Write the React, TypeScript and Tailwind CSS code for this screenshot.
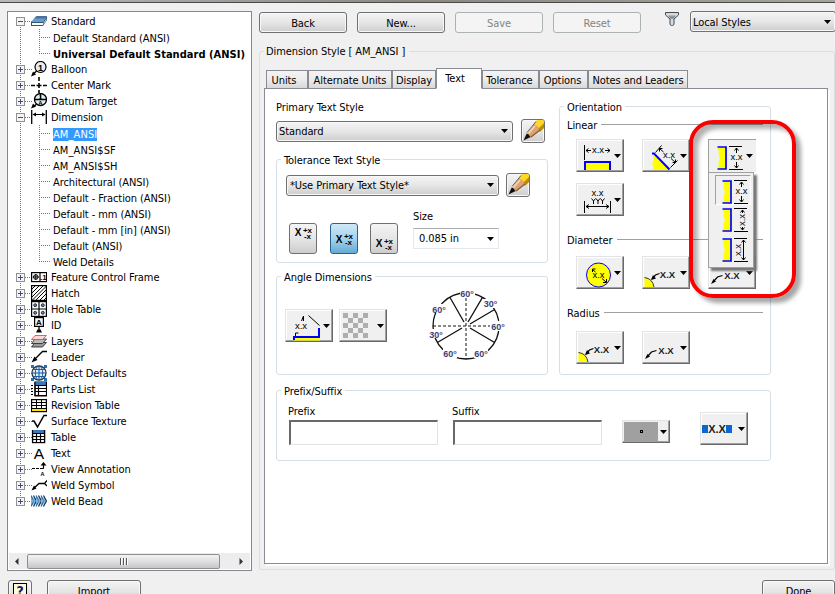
import React from 'react'
import clsx from 'clsx'

const FONT = "font-['DejaVu_Sans_Condensed','DejaVu_Sans',sans-serif]"

const treeItems = [
  {
    icon: 'standard',
    text: 'Standard',
    children: ['Default Standard (ANSI)', 'Universal Default Standard (ANSI)'],
  },
  { icon: 'balloon', text: 'Balloon' },
  { icon: 'center', text: 'Center Mark' },
  { icon: 'datum', text: 'Datum Target' },
  {
    icon: 'dimension',
    text: 'Dimension',
    children: [
      'AM_ANSI',
      'AM_ANSI$SF',
      'AM_ANSI$SH',
      'Architectural (ANSI)',
      'Default - Fraction (ANSI)',
      'Default - mm (ANSI)',
      'Default - mm [in] (ANSI)',
      'Default (ANSI)',
      'Weld Details',
    ],
  },
  { icon: 'fcf', text: 'Feature Control Frame' },
  { icon: 'hatch', text: 'Hatch' },
  { icon: 'hole', text: 'Hole Table' },
  { icon: 'id', text: 'ID' },
  { icon: 'layers', text: 'Layers' },
  { icon: 'leader', text: 'Leader' },
  { icon: 'globe', text: 'Object Defaults' },
  { icon: 'parts', text: 'Parts List' },
  { icon: 'revision', text: 'Revision Table' },
  { icon: 'surface', text: 'Surface Texture' },
  { icon: 'table', text: 'Table' },
  { icon: 'text', text: 'Text' },
  { icon: 'view', text: 'View Annotation' },
  { icon: 'weld', text: 'Weld Symbol' },
  { icon: 'bead', text: 'Weld Bead' },
]

const SvgText = ({ x, y, size = 9.5, bold = false, fill = '#000', children }: any) => (
  <text
    x={x}
    y={y}
    fontSize={size}
    fontWeight={bold ? 700 : 400}
    textAnchor="middle"
    letterSpacing="0"
    fill={fill}
    stroke="none"
    fontFamily="'Liberation Sans', sans-serif"
  >
    {children}
  </text>
)

const treeIcons: Record<string, React.ReactNode> = {
  standard: (
    <g stroke="none">
      <path d="M5 3h11l-4 6H0z" fill="#6c9cc8" />
      <path d="M6 3h10l-2 2.500H4z" fill="#4c7097" />
      <path d="M0 9h12l4-6v4l-4 6H0z" fill="#2f587f" />
      <path d="M1 10h11v2H1z" fill="#fff" />
      <path d="M12.500 10l3-4.500v1.500l-3 4.500z" fill="#cfdbe6" />
    </g>
  ),
  balloon: (
    <g>
      <circle cx="9.500" cy="6" r="5.500" fill="#e2edf5" strokeWidth="1.200" />
      <path d="M5.500 10l-3 3" strokeWidth="1.500" />
      <path d="M0 15.500l2-5 3 3z" fill="#000" stroke="none" />
      <SvgText x={9.500} y={9.500} size={9} bold>1</SvgText>
    </g>
  ),
  center: <path d="M8 0v4M8 6v5M8 13v3M0 8.500h4M5.500 8.500h5M12 8.500h4" strokeWidth="1.600" />,
  datum: (
    <g>
      <circle cx="9.500" cy="6.500" r="6" fill="#e2edf5" strokeWidth="1.300" />
      <path d="M3.500 6.500h12M9.500 1v5M5.500 11l-3 3" strokeWidth="1.300" />
      <path d="M0 15.500l2-5 3 3z" fill="#000" stroke="none" />
      <SvgText x={9.500} y={5.800} size={5.500} bold>1</SvgText>
      <SvgText x={9.500} y={12} size={6} bold>A</SvgText>
    </g>
  ),
  dimension: (
    <g>
      <path d="M.7 1v14M15.300 1v14" strokeWidth="1.300" />
      <path d="M2 5.500h12" />
      <path d="M1.500 5.500l3.500-2v4zM14.500 5.500l-3.500-2v4z" fill="#000" stroke="none" />
    </g>
  ),
  fcf: (
    <g>
      <rect x=".6" y="3.600" width="15" height="9" fill="#fff" strokeWidth="1.200" />
      <path d="M9 3.500v9" strokeWidth="1.200" />
      <circle cx="4.800" cy="8" r="2.300" />
      <path d="M4.800 5v6M1.800 8h6" />
      <SvgText x={12.300} y={11} size={8} bold>.1</SvgText>
    </g>
  ),
  hatch: (
    <g>
      <rect x=".6" y=".6" width="14.800" height="14.800" fill="#fff" strokeWidth="1.200" />
      <path d="M1 4l3-3M1 8l7-7M1 12l11-11M1 15.500l14.500-14.500M5 15l10-10M9 15l6-6M13 15l2-2" />
    </g>
  ),
  hole: (
    <g>
      <rect x=".6" y=".6" width="14.800" height="14.800" fill="#fff" strokeWidth="1.200" />
      <path d="M8 0v16M0 8h16" strokeWidth="1.200" />
      <g fill="#5b87b3" strokeWidth=".7">
        <circle cx="4.200" cy="4.200" r="1.500" />
        <circle cx="11.800" cy="4.200" r="1.500" />
        <circle cx="4.200" cy="11.800" r="1.500" />
        <circle cx="11.800" cy="11.800" r="1.500" />
      </g>
    </g>
  ),
  id: (
    <g>
      <rect x="3.600" y=".6" width="8.800" height="8.800" fill="#eef5fb" strokeWidth="1.200" />
      <SvgText x={8} y={8} size={8} bold>A</SvgText>
      <path d="M8 9v5" strokeWidth="1.300" />
      <path d="M5 15.500l1.500-3h3l1.500 3z" fill="#000" stroke="none" />
    </g>
  ),
  layers: (
    <g strokeWidth=".9">
      <path d="M4 9.500h11.500l-4 4.500H.5z" fill="#999" stroke="#333" />
      <path d="M4 6h11.500l-4 4.500H.5z" fill="#bbb" stroke="#333" />
      <path d="M4 2.500h11.500l-4 4H.5z" fill="#fbd7d7" stroke="#e64d4d" />
    </g>
  ),
  leader: (
    <g>
      <path d="M16 2.500h-4.500l-8 8" strokeWidth="1.300" />
      <path d="M.5 13.500l3-6 3 3.500z" fill="#000" stroke="none" />
    </g>
  ),
  globe: (
    <g stroke="#1d5a9a">
      <path d="M0 0h3v3H0zM13 0h3v3h-3zM0 13h3v3H0zM13 13h3v3h-3z" fill="#2471b7" stroke="none" />
      <circle cx="8" cy="8" r="7" fill="#dff0fc" strokeWidth="1.300" stroke="#333" />
      <path d="M8 1v14M1 8h14M2 4.500h12M2 11.500h12" strokeWidth="1.100" />
      <ellipse cx="8" cy="8" rx="3.700" ry="7" />
    </g>
  ),
  parts: (
    <g>
      <rect x="4" y="1" width="11.500" height="14" fill="#fff" />
      <rect x="4" y="1" width="11.500" height="3" fill="#3a78b9" stroke="none" />
      <path d="M4 4.500h12M4 7.500h12M4 10.500h12M4 14.500h12M7.500 4v11M4 1v14M15.500 1v14" strokeWidth="1.200" />
      <path d="M0 4.500h2M0 7.500h2M0 10.500h2M0 13.500h2" />
    </g>
  ),
  revision: (
    <g>
      <rect x=".6" y="2.600" width="14.800" height="12" fill="#fff" strokeWidth="1.200" />
      <path d="M1 12h14v2H1z" fill="#ffe600" stroke="none" />
      <path d="M1 5.500h14M1 8.500h14M1 11.500h14M5.500 3v9M10.500 3v9" />
    </g>
  ),
  surface: <path d="M1 8h2l3.500 6L13 2.500h3" strokeWidth="1.500" />,
  table: (
    <g>
      <rect x="1.600" y="1.600" width="12" height="12" fill="#fff" strokeWidth="1.200" />
      <path d="M1 1h13v3H1z" fill="#3a78b9" stroke="none" />
      <path d="M1 4.500h13M1 7.500h13M1 10.500h13M5.500 4v10M9.500 4v10M1.500 1v13M13.500 1v13" strokeWidth="1.200" />
    </g>
  ),
  text: <SvgText x={8} y={14} size={15.5}>A</SvgText>,
  view: (
    <g>
      <path d="M1 7.500h3M5 7.500h3M9 7.500h3.500M12.500 7.500V3" strokeWidth="1.200" />
      <path d="M12.500 1l-3 3.500h6z" fill="#000" stroke="none" />
      <SvgText x={11.500} y={15} size={5.500} bold>A</SvgText>
    </g>
  ),
  weld: (
    <g>
      <path d="M2 12l6-5.500h5.500M16 3.500l-2.500 3 2.500 2.500" strokeWidth="1.300" />
      <path d="M.5 13.500l2.500-5 2.500 3z" fill="#000" stroke="none" />
    </g>
  ),
  bead: (
    <g strokeWidth="1.200">
      {[0, 2.5, 5, 7.5, 10, 12.5].map((x) => (
        <path key={x} d={`M${x} 2.500l3 5.500l-3 5.500`} stroke={x % 5 ? '#1b3550' : '#2b6ba3'} fill="#7db0dc" />
      ))}
    </g>
  ),
}

const TreeRow = ({ icon, text, expanded, first, last }: any) => (
  <div className="flex h-4 items-center">
    <svg width="23" height="16" className="ml-[7px] shrink-0" shapeRendering="crispEdges">
      <path d={first ? 'M4.500 8v8' : last ? 'M4.500 0v8' : 'M4.500 0v16'} stroke="#777" strokeDasharray="1 1" />
      <path d="M9 8.500h7" stroke="#777" strokeDasharray="1 1" />
      <rect x=".5" y="4.500" width="8" height="8" fill="#f4f4f4" stroke="#919191" />
      <path d={expanded ? 'M2 8.500h5' : 'M2 8.500h5M4.500 6v5'} stroke="#33508c" />
    </svg>
    <svg width="16" height="16" viewBox="0 0 16 16" fill="none" stroke="#000" className="-ml-2 shrink-0">
      {treeIcons[icon]}
    </svg>
    <span className="ml-1 pt-0.5 leading-4">{text}</span>
  </div>
)

const TreeChild = ({ text, last }: any) => (
  <div className="flex h-4 items-center">
    <svg width="44" height="16" className="shrink-0" shapeRendering="crispEdges">
      <path d="M11.500 0v16" stroke="#777" strokeDasharray="1 1" />
      <path d={last ? 'M30.500 0v8M30 8.500h11' : 'M30.500 0v16M30 8.500h11'} stroke="#777" strokeDasharray="1 1" />
    </svg>
    <span
      className={clsx(
        'mt-0.5 h-[13px] leading-[13px]',
        text === 'AM_ANSI' && 'bg-[#3399ff] text-white',
        text.startsWith('AM_') && 'tracking-[0.1px]',
        text.startsWith('Universal') && 'font-bold tracking-[0.03px]'
      )}
    >
      {text}
    </span>
  </div>
)

const Tree = () => (
  <div className="flex h-[560px] w-[245px] shrink-0 flex-col border border-[#828790] bg-white p-px">
    <div className="flex-1">
      {treeItems.map((item, index) => (
        <div key={item.text}>
          <TreeRow {...item} expanded={!!item.children} first={index === 0} last={index === treeItems.length - 1} />
          {item.children &&
            item.children.map((child, i) => (
              <TreeChild key={child} text={child} last={i === item.children.length - 1} />
            ))}
        </div>
      ))}
    </div>
    <div className="flex h-4 items-center bg-[#ededed]">
      <svg width="18" height="15">
        <path d="M9.500 4v7l-3.500-3.500z" fill="#333" />
      </svg>
      <div className="flex h-[15px] w-[193px] items-center justify-center gap-px rounded-[2px] border border-[#8f8f8f] bg-gradient-to-b from-[#f3f3f3] via-[#dfdfdf] to-[#c6c6c6]">
        <i className="h-[7px] w-0.5 border-r border-white bg-[#555]" />
        <i className="h-[7px] w-0.5 border-r border-white bg-[#555]" />
        <i className="h-[7px] w-0.5 border-r border-white bg-[#555]" />
      </div>
      <svg width="29" height="15">
        <path d="M19.500 4v7l3.500-3.500z" fill="#333" />
      </svg>
    </div>
  </div>
)

const Caret = () => (
  <svg width="7" height="4" className="shrink-0">
    <path d="M0 0h7l-3.500 4z" />
  </svg>
)

const Button = ({ children, className, disabled }: any) => (
  <button
    className={clsx(
      'flex items-center justify-center rounded-[3px] border',
      disabled
        ? 'border-[#adb2b5] bg-[#f4f4f4] text-[#838383]'
        : 'border-[#707070] bg-gradient-to-b from-[#f4f4f4] via-[#e6e6e6] to-[#cdcdcd] shadow-[inset_0_0_0_1px_#f8f8f8]',
      className
    )}
  >
    {children}
  </button>
)

const Select = ({ children, className }: any) => (
  <div
    className={clsx(
      'flex h-[21px] shrink-0 items-center justify-between rounded-[3px] border border-[#707070] bg-gradient-to-b from-[#f4f4f4] via-[#e6e6e6] to-[#cdcdcd] pr-1 pl-0.5 shadow-[inset_0_0_0_1px_#f8f8f8]',
      className
    )}
  >
    <span className="pt-[3px]">{children}</span>
    <Caret />
  </div>
)

const Group = ({ title, className, children }: any) => (
  <div className={clsx('flex flex-col rounded-[3px] border border-[#d5dfe5]', className)}>
    <div className="-mt-[7px] ml-1 h-4 w-fit shrink-0 bg-white px-[3px] leading-4">{title}</div>
    {children}
  </div>
)

const PencilButton = () => (
  <Button className="h-6 w-6 shrink-0 overflow-hidden">
    <svg width="22" height="22" viewBox="0 0 22 22" className="shrink-0">
      <path d="M14 1h7.500v7L9 17.500l-6 2 3-7z" fill="#dda273" />
      <path d="M13 3l2-3h7v7l-4 4q-1-5-5-6z" fill="#ffd91f" />
      <path d="M22 3v5l-4 4-1.500-3.500z" fill="#b98d00" />
      <path d="M9 17l9-7" fill="none" stroke="#8d5a30" strokeWidth="1.200" />
      <path d="M13 6L6.500 13.500" fill="none" stroke="#f7d3b2" strokeWidth="1.700" />
      <path d="M1.500 20.500l3.200-7 1.800 1 2 2.500z" fill="#111" />
      <path d="M14 1.500L5 12.500" stroke="#444" strokeWidth=".8" />
    </svg>
  </Button>
)

// classic raised tool button, the drawing uses the button's own 48x33 grid
const ToolButton = ({ children, caretY = 15, flat = false }: any) => (
  <div
    className={clsx(
      'h-[33px] w-12 shrink-0 bg-[#f0f0f0]',
      flat
        ? 'border-t border-l border-[#a0a0a0]'
        : 'border border-t-[#e3e3e3] border-r-[#696969] border-b-[#696969] border-l-[#e3e3e3] shadow-[inset_-1px_-1px_0_#a0a0a0,inset_1px_1px_0_#fff]'
    )}
  >
    <svg width="46" height="31" viewBox="1 1 46 31" fill="none" stroke="#000">
      {children}
      <path d={`M38 ${caretY}h7l-3.500 4z`} fill="#000" stroke="none" />
    </svg>
  </div>
)

const Wall = () => (
  <g>
    <path d="M9.500 8H18v22H9.500q2-4 1-7q2.500-4 0-8q1-3-1-7z" fill="#ff0" stroke="none" />
    <path d="M9.500 8H18v22H9.500" stroke="#00f" strokeWidth="1.700" />
    <path d="M21 7.500h13M21 30.500h14" />
  </g>
)

const WallCentered = () => (
  <g>
    <Wall />
    <path d="M28.500 9v5M28.500 23v6M26.500 11.500l2-2.500 2 2.500M26.500 26.500l2 2.500 2-2.500" />
    <SvgText x={28.500} y={21}>x.x</SvgText>
  </g>
)

const QuarterLeader = () => (
  <g>
    <path d="M2.500 31V21.500q8 1 9 9.500z" fill="#ff0" stroke="none" />
    <path d="M2.500 21.500q8 1 9.500 9.500" stroke="#333" />
    <path d="M10 23l3.500-4 4-1.500" strokeWidth="1.200" />
    <path d="M9 24l2-5 3 3.500z" fill="#000" stroke="none" />
    <SvgText x={25.500} y={21.500} size={9.500} bold fill="#222">X.X</SvgText>
  </g>
)

const Leader = () => (
  <g>
    <path d="M5 26l4.500-5 5-1.500" strokeWidth="1.200" />
    <path d="M3 28l2.500-5 2.500 2.500z" fill="#000" stroke="none" />
    <SvgText x={24} y={23} size={9.500} bold fill="#222">X.X</SvgText>
  </g>
)

const SectionTitle = ({ children }: any) => (
  <div className="ml-[7px] flex h-4 w-[196px] items-center gap-1">
    <span className="pt-0.5">{children}</span>
    <i className="mb-px h-px flex-1 bg-[#a0a0a0]" />
  </div>
)

const PopupMenu = () => (
  <div className="absolute top-[33px] left-0 z-10 flex h-24 w-[46px] flex-col border border-[#a0a0a0] bg-[#f0f0f0] pt-0.5 shadow-[3px_3px_2px_#777]">
    <div className="ml-1.5 h-[30px] w-9 shrink-0 border border-t-[#a0a0a0] border-r-white border-b-white border-l-[#a0a0a0]">
      <svg width="34" height="28" viewBox="3 3 34 28" fill="none" stroke="#000">
        <WallCentered />
      </svg>
    </div>
    <svg width="34" height="30" viewBox="3 4 34 30" fill="none" stroke="#000" className="ml-[7px] shrink-0">
      <Wall />
      <path d="M29.500 9v3M29.500 26v3M27.500 11.500l2-2.500 2 2.500M27.500 26.500l2 2.500 2-2.500" />
      <g transform="rotate(-90 29 19)">
        <SvgText x={29} y={21.500}>x.x</SvgText>
      </g>
    </svg>
    <svg width="34" height="30" viewBox="3 4 34 30" fill="none" stroke="#000" className="ml-[7px] shrink-0">
      <Wall />
      <path d="M30.500 9v20M28.500 11.500l2-2.500 2 2.500M28.500 26.500l2 2.500 2-2.500" />
      <g transform="rotate(-90 25 19)">
        <SvgText x={25} y={21.500}>x.x</SvgText>
      </g>
    </svg>
  </div>
)

const Orientation = () => (
  <Group title="Orientation" className="h-[269px] w-[212px]">
    <div className="mt-px">
      <SectionTitle>Linear</SectionTitle>
    </div>
    <div className="mt-1.5 ml-4 grid w-fit grid-cols-[48px_48px_48px] gap-x-[18px] gap-y-[11px]">
      <ToolButton>
        <path d="M8.500 6v15M10 11.500h5M29 11.500h5M12.500 9.500l-2.500 2 2.500 2M31.500 9.500l2.500 2-2.500 2" />
        <path d="M8.500 31V23h26v8z" fill="#ff0" stroke="none" />
        <path d="M9 31v-8h25v8" stroke="#00f" strokeWidth="2" />
        <SvgText x={22} y={14}>x.x</SvgText>
      </ToolButton>
      <ToolButton>
        <path d="M11 15l16 16H10q3-3 0-6q2-4 1-10z" fill="#ff0" stroke="none" />
        <path d="M10 14.500h2l15.500 16" stroke="#00f" strokeWidth="2" />
        <path d="M13.500 13.500l6-7M28.500 28.500l7-7M17.500 9.500l4 3.500M29 19.500l4.500 4M17.500 12.500v-3h3M33.500 20.500v3h-3" />
        <SvgText x={27} y={19}>x.x</SvgText>
      </ToolButton>
      <div className="relative">
        <ToolButton flat>
          <WallCentered />
        </ToolButton>
        <PopupMenu />
      </div>
      <ToolButton>
        <path d="M8.500 18v12M34.500 18v12M10 23.500h23M13 21.500l-3 2 3 2M30 21.500l3 2-3 2" />
        <SvgText x={21.500} y={13}>x.x</SvgText>
        <path d="M15.500 15.500l2 2.500 2-2.500M17.500 18v3M20 15.500l2 2.500 2-2.500M22 18v3M24.500 15.500l2 2.500 2-2.500M26.500 18v3" />
      </ToolButton>
    </div>
    <div className="mt-4">
      <SectionTitle>Diameter</SectionTitle>
    </div>
    <div className="mt-2 ml-4 flex gap-[18px]">
      <ToolButton>
        <circle cx="22.500" cy="19" r="12" fill="#ff0" stroke="#00f" />
        <path d="M16.500 13.500l3 2.500M26 22.500l4 3.500M16.500 16v-3h3M30.500 23v3.500h-3.500" />
        <SvgText x={22.500} y={22}>x.x</SvgText>
      </ToolButton>
      <ToolButton>
        <QuarterLeader />
      </ToolButton>
      <ToolButton>
        <Leader />
      </ToolButton>
    </div>
    <div className="mt-4">
      <SectionTitle>Radius</SectionTitle>
    </div>
    <div className="mt-[10px] ml-4 flex gap-[18px]">
      <ToolButton>
        <QuarterLeader />
      </ToolButton>
      <ToolButton>
        <Leader />
      </ToolButton>
    </div>
  </Group>
)

const AngleDial = () => (
  <svg width="84" height="76" viewBox="-42 -38 84 76" fill="none" stroke="#111" className="ml-[37px]">
    <circle r="33" strokeWidth="1.300" />
    <path d="M0 -28V33M-33 0H24" strokeDasharray="3 2" />
    <path d="M2 -4l14.500 -24.600M4 -2l24.600 -14.500M-2 -4l-14 -24.500M-4 2l-24.600 14.500M4 2l24.600 14.500" strokeWidth="1.300" />
    <g fill="#fff" stroke="none">
      <path d="M-6 -37h15v9h-15zM18 -27h13v9H18zM26 -5h12v10H26zM8 22h14v10H8zM-23 22h14v10h-14zM-37 3h14v9h-14zM-34 -22h14v9h-14z" />
    </g>
    <g opacity=".9">
      <SvgText x={1} y={-29} size={9} bold fill="#2b2b68">60°</SvgText>
      <SvgText x={24.500} y={-19} size={9} bold fill="#2b2b68">30°</SvgText>
      <SvgText x={32} y={3.500} size={9} bold fill="#2b2b68">60°</SvgText>
      <SvgText x={15} y={31} size={9} bold fill="#2b2b68">60°</SvgText>
      <SvgText x={-16} y={31} size={9} bold fill="#2b2b68">60°</SvgText>
      <SvgText x={-30} y={11.500} size={9} bold fill="#2b2b68">30°</SvgText>
      <SvgText x={-27} y={-13.500} size={9} bold fill="#2b2b68">60°</SvgText>
    </g>
  </svg>
)

const AlignButton = ({ y, active }: any) => (
  <div
    className={clsx(
      'h-[31px] w-7 rounded-[3px] border',
      active
        ? 'border-[#2c628b] bg-gradient-to-b from-[#cfe8f6] via-[#a3d3ee] to-[#66abd6]'
        : 'border-[#707070] bg-gradient-to-b from-[#f4f4f4] via-[#e6e6e6] to-[#cdcdcd]'
    )}
  >
    <svg width="26" height="29">
      <SvgText x={8} y={y} size={10} bold>X</SvgText>
      <SvgText x={17.500} y={y - 3.500} size={8} bold>+x</SvgText>
      <SvgText x={17.500} y={y + 2.500} size={8} bold>-x</SvgText>
    </svg>
  </div>
)

const Checker = () => {
  const cells = []
  for (let i = 0; i < 25; i += 2) {
    cells.push(<rect key={i} x={4 + (i % 5) * 5} y={4 + Math.floor(i / 5) * 5} width="5" height="5" />)
  }
  return <g fill="#aeaeae" stroke="none">{cells}</g>
}

const TextPage = () => (
  <div className="h-[476px] w-[564px] border border-[#898c95] bg-white pl-[11px] shadow-[2px_2px_0_#fcfcfc]">
    <div className="flex gap-[11px]">
      <div className="w-[272px]">
        <div className="mt-[10px] h-4 leading-[18px]">Primary Text Style</div>
        <div className="mt-1 flex items-center gap-2">
          <Select className="w-[237px]">Standard</Select>
          <PencilButton />
        </div>
        <Group title="Tolerance Text Style" className="mt-4 h-[104px]">
          <div className="mt-1 ml-[9px] flex items-center gap-[7px]">
            <Select className="w-[213px] pl-[3px]">*Use Primary Text Style*</Select>
            <PencilButton />
          </div>
          <div className="ml-3 flex">
            <div className="mt-[26px] flex gap-[12.500px]">
              <AlignButton y={12} />
              <AlignButton y={18.500} active />
              <AlignButton y={23} />
            </div>
            <div className="mt-[11px] ml-[15px]">
              <div className="h-4 leading-[18px]">Size</div>
              <div className="mt-1 flex h-[21px] w-[86px] items-center justify-between border border-[#e3e9ef] border-t-[#abadb3] pr-1 pl-[5px]">
                <span className="pt-0.5">0.085 in</span>
                <Caret />
              </div>
            </div>
          </div>
        </Group>
        <Group title="Angle Dimensions" className="mt-[13px] h-[99px]">
          <div className="ml-2 flex">
            <div className="mt-[23px] flex gap-1.5">
              <ToolButton>
                <path d="M23.500 6.500l11 10M16.500 12l2-5v5M10.500 28v-4h3" />
                <path d="M9 28.500h26v3H9z" fill="#ff0" stroke="none" />
                <path d="M9 31v-3h25v-9" stroke="#00f" strokeWidth="2" />
                <SvgText x={16} y={19.500}>x.x</SvgText>
              </ToolButton>
              <ToolButton>
                <Checker />
              </ToolButton>
            </div>
            <div className="mt-[2px]">
              <AngleDial />
            </div>
          </div>
        </Group>
      </div>
      <div className="mt-[17px]">
        <Orientation />
      </div>
    </div>
    <Group title="Prefix/Suffix" className="mt-[15px] h-[71px] w-[495px]">
      <div className="mt-[3px] ml-3 flex">
        {['Prefix', 'Suffix'].map((name) => (
          <label key={name} className="block w-[164px]">
            <span className="-ml-px block h-4 leading-[18px]">{name}</span>
            <input className="mt-px block h-[25px] w-[149px] border border-t-2 border-l-2 border-[#e3e3e3] border-t-[#696969] border-l-[#696969] bg-white" />
          </label>
        ))}
        <div className="mt-[17px] ml-[5px] flex h-[23px] w-12 border border-[#e3e3e3] border-r-[#696969] border-b-[#696969] bg-[#f0f0f0] p-px shadow-[inset_-1px_-1px_0_#a0a0a0]">
          <div className="flex h-full w-[34px] items-center justify-center bg-[#a0a0a0]">
            <i className="h-[3px] w-[3px] border border-black" />
          </div>
          <div className="flex w-2.5 items-center justify-center">
            <Caret />
          </div>
        </div>
        <div className="mt-[9px] ml-[30px]">
          <ToolButton>
            <path d="M2 13h6v8H2zM26 13h6v8h-6z" fill="#0a66d0" stroke="none" />
            <SvgText x={17} y={21} size={11} bold fill="#222">X.X</SvgText>
          </ToolButton>
        </div>
      </div>
    </Group>
  </div>
)

const tabs = [
  { name: 'Units', width: 'w-[42px] pr-1.5' },
  { name: 'Alternate Units', width: 'w-[84px]' },
  { name: 'Display', width: 'w-11' },
  { name: 'Text', width: 'w-[46px]' },
  { name: 'Tolerance', width: 'w-[57px] pr-0.5' },
  { name: 'Options', width: 'w-[49px] pr-0.5' },
  { name: 'Notes and Leaders', width: 'w-[100px]' },
]

const Tabs = () => (
  <div className="relative z-10 -mb-px ml-0.5 flex h-[21px] items-end">
    {tabs.map(({ name, width }) => (
      <div
        key={name}
        className={clsx(
          'flex shrink-0 justify-center border border-[#898c95] whitespace-nowrap',
          width,
          name === 'Text'
            ? 'h-[21px] border-b-white bg-white pr-2 leading-5'
            : 'h-[19px] bg-gradient-to-b from-[#f3f3f3] via-[#ececec] to-[#d8d8d8] leading-5'
        )}
      >
        {name}
      </div>
    ))}
  </div>
)

export default function App() {
  return (
    <div
      className={clsx(
        'relative flex h-[594px] w-[835px] flex-col overflow-hidden bg-[#f0f0f0] text-[11px] tracking-[-0.08px] text-black',
        FONT
      )}
    >
      <div className="h-[3px] shrink-0 border-b border-[#4a4a4a] bg-gradient-to-r from-[#b8b8b8] via-[#8d8780] to-[#a5a59c]" />
      <div className="flex h-[577px] shrink-0 pt-2 pl-[7px]">
        <Tree />
        <div className="ml-[7px] flex flex-col">
          <div className="flex pt-px">
            <div className="flex gap-[10px]">
              <Button className="h-[21px] w-[88px] pt-[3px]">Back</Button>
              <Button className="h-[21px] w-[88px] pt-[3px]">New...</Button>
              <Button className="h-[21px] w-[88px] pt-[3px]" disabled>Save</Button>
              <Button className="h-[21px] w-[88px] pt-[3px]" disabled>Reset</Button>
            </div>
            <svg width="15" height="14" className="ml-6">
              <path d="M.5 .5h13v2.500l-4.500 4v5.500l-1.500 1h-1l-1.500-1V7L.5 3z" fill="#d7dbe0" stroke="#444b53" />
              <path d="M3 3.500h8L8.500 7h-3z" fill="#8d959e" />
            </svg>
            <Select className="-mt-px ml-[10px] w-[146px]">Local Styles</Select>
          </div>
          <div className="mt-[18px] h-[519px] w-[576px] rounded-[3px] border border-[#d5dfe5] pl-1">
            <div className="-mt-[9px] h-[18px] w-fit bg-[#f0f0f0] px-0.5 pr-1 leading-[18px] whitespace-pre">Dimension Style [ AM_ANSI ]</div>
            <div className="mt-[7px]">
              <Tabs />
            </div>
            <TextPage />
          </div>
        </div>
      </div>
      <div className="flex shrink-0 pl-2">
        <Button className="h-[22px] w-6">
          <span className="flex h-4 w-3.5 items-center justify-center border border-black bg-[#fffbd0] text-[14px] font-bold text-[#101080]">?</span>
        </Button>
        <Button className="ml-[15px] h-[22px] w-[94px] pt-0.5">Import</Button>
        <Button className="ml-[621px] h-[22px] w-[73px] pt-0.5">Done</Button>
      </div>
      <div className="absolute top-[120px] left-[689px] z-20 h-[178px] w-[107px] rounded-[24px] border-4 border-[#fb0000] shadow-[5px_5px_4px_rgba(0,0,0,0.35),inset_5px_5px_4px_rgba(0,0,0,0.3)]" />
    </div>
  )
}
